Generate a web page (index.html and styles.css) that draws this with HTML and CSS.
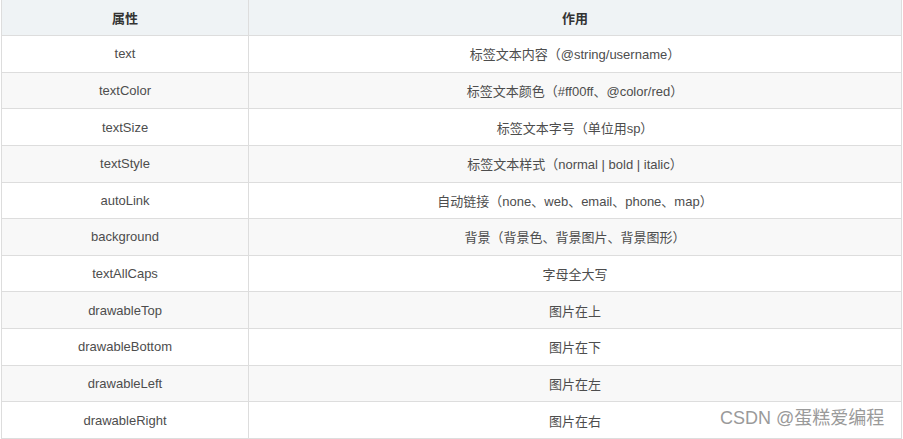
FILE: index.html
```html
<!DOCTYPE html>
<html lang="zh">
<head>
<meta charset="utf-8">
<title>TextView 属性</title>
<link rel="stylesheet" href="styles.css">
</head>
<body>
<div class="page">
  <table class="attr-table">
    <thead>
      <tr><th class="c1">属性</th><th class="c2">作用</th></tr>
    </thead>
    <tbody>
      <tr><td class="c1">text</td><td class="c2">标签文本内容（@string/username）</td></tr>
      <tr><td class="c1">textColor</td><td class="c2">标签文本颜色（#ff00ff、@color/red）</td></tr>
      <tr><td class="c1">textSize</td><td class="c2">标签文本字号（单位用sp）</td></tr>
      <tr><td class="c1">textStyle</td><td class="c2">标签文本样式（normal | bold | italic）</td></tr>
      <tr><td class="c1">autoLink</td><td class="c2">自动链接（none、web、email、phone、map）</td></tr>
      <tr><td class="c1">background</td><td class="c2">背景（背景色、背景图片、背景图形）</td></tr>
      <tr><td class="c1">textAllCaps</td><td class="c2">字母全大写</td></tr>
      <tr><td class="c1">drawableTop</td><td class="c2">图片在上</td></tr>
      <tr><td class="c1">drawableBottom</td><td class="c2">图片在下</td></tr>
      <tr><td class="c1">drawableLeft</td><td class="c2">图片在左</td></tr>
      <tr><td class="c1">drawableRight</td><td class="c2">图片在右</td></tr>
    </tbody>
  </table>
  <div class="watermark">CSDN @蛋糕爱编程</div>
</div>
</body>
</html>
```
FILE: styles.css
```css
html, body {
  margin: 0;
  padding: 0;
  background: #ffffff;
}
.page {
  position: relative;
  width: 903px;
  height: 439px;
  overflow: hidden;
  font-family: "Liberation Sans", Arial, "Noto Sans CJK SC", sans-serif;
  font-size: 13px;
  color: #4d4d4d;
}
.attr-table {
  margin-left: 1px;
  border-collapse: separate;
  border-spacing: 0;
  table-layout: fixed;
  width: 901px;
}
.attr-table th,
.attr-table td {
  padding: 0;
  text-align: center;
  vertical-align: middle;
  border-right: 1px solid #dddddd;
  border-bottom: 1px solid #dddddd;
  box-sizing: border-box;
}
.attr-table .c1 {
  border-left: 1px solid #dddddd;
  width: 248px;
}
.attr-table th {
  height: 36px;
  background: #eff3f5;
  color: #333333;
  font-weight: bold;
}
.attr-table td {
  height: 36.64px;
}
.attr-table tbody tr:nth-child(even) td {
  background: #f8f8f8;
}
.watermark {
  position: absolute;
  left: 720px;
  top: 408px;
  font-size: 18px;
  line-height: 20px;
  color: #9a9a9a;
  white-space: nowrap;
}
```
